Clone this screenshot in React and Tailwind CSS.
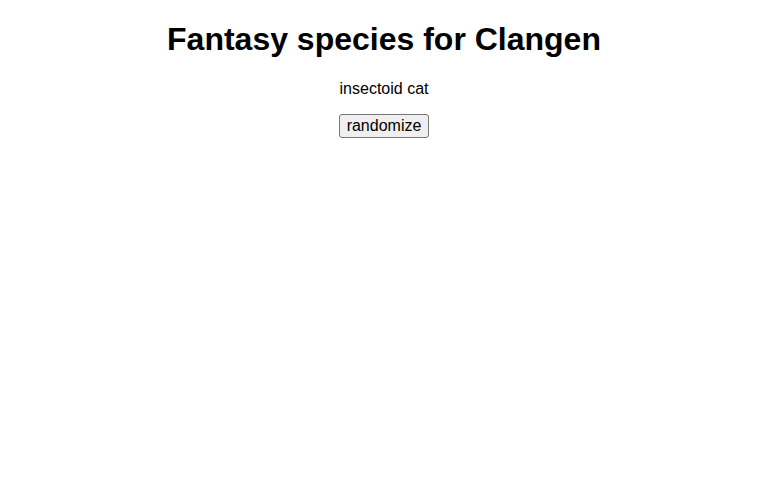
import React, { useState } from 'react';

const SPECIES = ['insectoid cat', 'winged cat', 'aquatic cat', 'crystal cat', 'shadow cat'];

export default function App() {
    const [idx, setIdx] = useState(0);
    const randomize = () => setIdx(Math.floor(Math.random() * SPECIES.length));

    return (
        <div className="min-h-screen bg-white text-black text-center font-['Liberation_Sans',Arial,sans-serif]">
            <h1 className="pt-[21px] text-[32px] font-bold leading-[37px]">Fantasy species for Clangen</h1>
            <p className="mt-[22px] text-base leading-[18px]">{SPECIES[idx]}</p>
            <div className="mt-4">
                <button
                    onClick={randomize}
                    className="px-[7px] py-[1px] text-base leading-[20px] bg-[#efefef] border border-[#767676] rounded-[3px] hover:bg-[#e5e5e5]"
                >
                    randomize
                </button>
            </div>
        </div>
    );
}
